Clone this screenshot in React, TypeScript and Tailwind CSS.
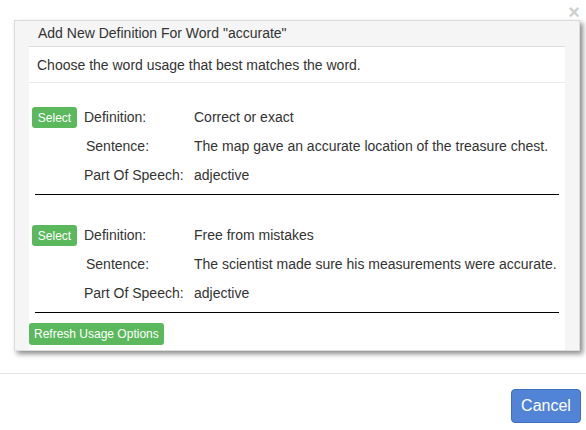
import React from 'react'

const usages = [
  {
    definition: 'Correct or exact',
    sentence: 'The map gave an accurate location of the treasure chest.',
    pos: 'adjective',
  },
  {
    definition: 'Free from mistakes',
    sentence: 'The scientist made sure his measurements were accurate.',
    pos: 'adjective',
  },
]

function Usage({ u, first }: { u: (typeof usages)[number]; first: boolean }) {
  return (
    <div className={first ? 'pt-[20px]' : 'pt-[26px]'}>
      <div className="flex h-[29px] items-center">
        <button className="ml-[3px] h-[21px] w-[45px] rounded-[3px] bg-[#5cb85c] text-[12px] text-white">
          Select
        </button>
        <div className="ml-[7px] w-[110px]">Definition:</div>
        <div>{u.definition}</div>
      </div>
      <div className="flex h-[29px] items-center">
        <div className="ml-[57px] w-[108px]">Sentence:</div>
        <div>{u.sentence}</div>
      </div>
      <div className="flex h-[29px] items-center">
        <div className="ml-[55px] w-[110px]">Part Of Speech:</div>
        <div>{u.pos}</div>
      </div>
      <div className="mx-[6px] mt-[4px] h-px bg-black" />
    </div>
  )
}

export default function App() {
  return (
    <div className="relative h-[430px] w-[586px] bg-white font-['Liberation_Sans',Arial,sans-serif] text-[14px] text-[#333]">
      <span className="absolute right-[6px] top-[1px] text-[20px] font-bold leading-[22px] text-[#cfcfcf]">×</span>

      <div className="pl-[14px] pr-[6px] pt-[20px]">
        <div className="border border-[#dcdcdc] bg-[#f5f5f5] shadow-[3px_3px_5px_rgba(0,0,0,0.45)]">
          <div className="h-[25px] pl-[23px] leading-[25px]">Add New Definition For Word "accurate"</div>
          <div className="mx-[14px] border-t border-[#dcdcdc] bg-white pb-[5px]">
            <div className="h-[36px] border-b border-[#e8e8e8] pl-[8px] leading-[36px]">
              Choose the word usage that best matches the word.
            </div>
            {usages.map((u, i) => (
              <Usage key={i} u={u} first={i === 0} />
            ))}
            <button className="mt-[10px] h-[22px] rounded-[3px] bg-[#5cb85c] px-[5px] text-[12px] text-white">
              Refresh Usage Options
            </button>
          </div>
        </div>
      </div>

      <div className="mt-[22px] border-t border-[#e5e5e5] pt-[15px]">
        <div className="flex justify-end pr-[5px]">
          <button className="h-[34px] w-[70px] rounded-[4px] border border-[#3f70c0] bg-[#5184d6] text-[16px] text-white">
            Cancel
          </button>
        </div>
      </div>
    </div>
  )
}
